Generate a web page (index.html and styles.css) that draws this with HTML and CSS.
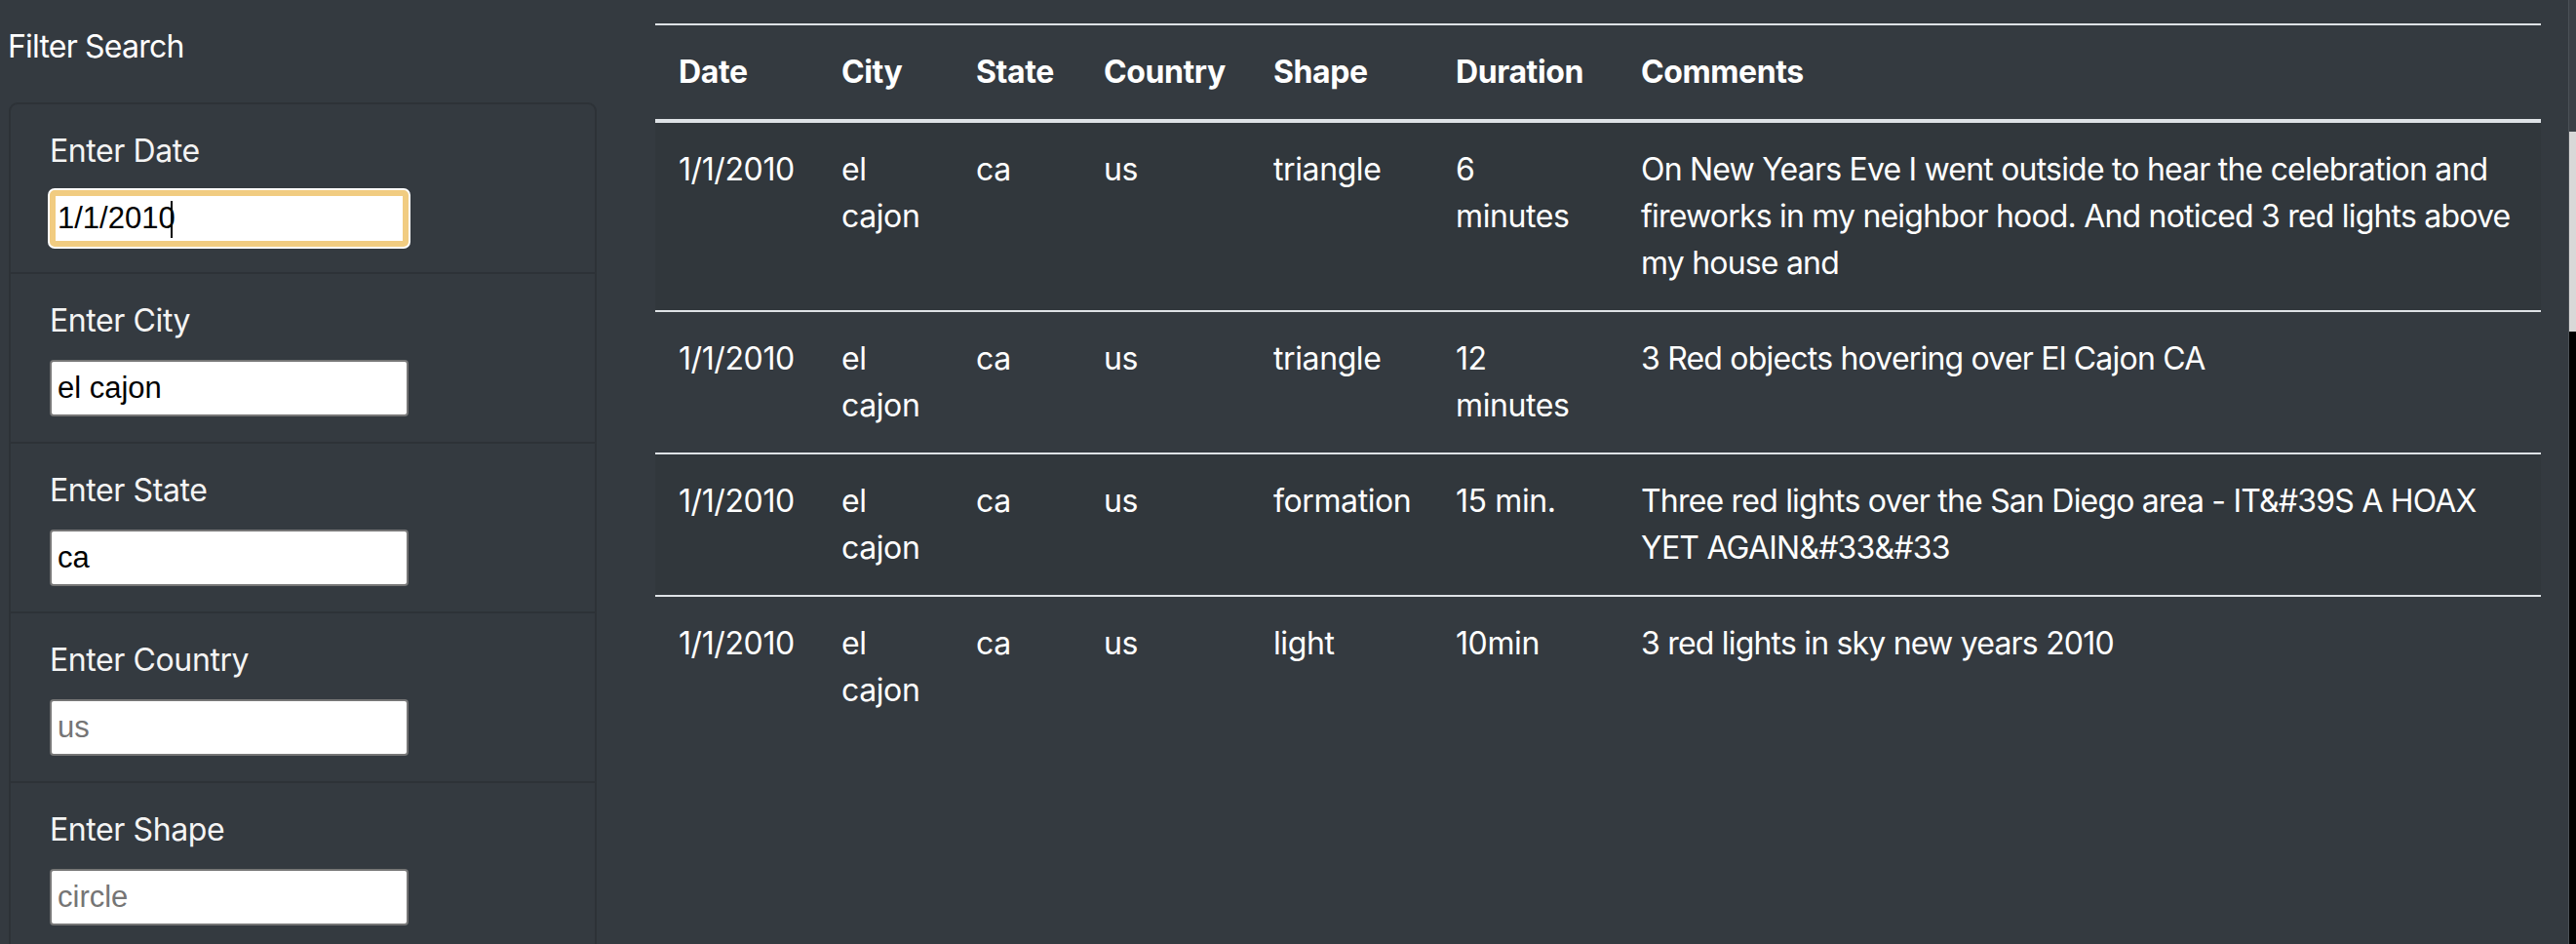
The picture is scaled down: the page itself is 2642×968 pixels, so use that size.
FILE: index.html
```html
<!DOCTYPE html>
<html lang="en">
<head>
<meta charset="utf-8">
<title>UFO Sightings</title>
<link rel="stylesheet" href="styles.css">
</head>
<body>
<div class="page">
  <aside class="sidebar">
    <div class="filter-title">Filter Search</div>
    <ul class="filters">
      <li class="filter">
        <label class="filter-label" for="datetime">Enter Date</label>
        <div class="field">
          <input class="filter-input is-focused" id="datetime" type="text" value="1/1/2010">
          <span class="caret"></span>
        </div>
      </li>
      <li class="filter">
        <label class="filter-label" for="city">Enter City</label>
        <div class="field"><input class="filter-input" id="city" type="text" value="el cajon"></div>
      </li>
      <li class="filter">
        <label class="filter-label" for="state">Enter State</label>
        <div class="field"><input class="filter-input" id="state" type="text" value="ca"></div>
      </li>
      <li class="filter">
        <label class="filter-label" for="country">Enter Country</label>
        <div class="field"><input class="filter-input" id="country" type="text" placeholder="us"></div>
      </li>
      <li class="filter">
        <label class="filter-label" for="shape">Enter Shape</label>
        <div class="field"><input class="filter-input" id="shape" type="text" placeholder="circle"></div>
      </li>
    </ul>
  </aside>
  <main class="content">
    <table class="sightings">
      <colgroup>
        <col class="c-date"><col class="c-city"><col class="c-state"><col class="c-country"><col class="c-shape"><col class="c-duration"><col class="c-comments">
      </colgroup>
      <thead>
        <tr><th>Date</th><th>City</th><th>State</th><th>Country</th><th>Shape</th><th>Duration</th><th>Comments</th></tr>
      </thead>
      <tbody>
        <tr><td>1/1/2010</td><td>el cajon</td><td>ca</td><td>us</td><td>triangle</td><td>6 minutes</td><td class="comment">On New Years Eve I went outside to hear the celebration and fireworks in my neighbor hood. And noticed 3 red lights above my house and</td></tr>
        <tr><td>1/1/2010</td><td>el cajon</td><td>ca</td><td>us</td><td>triangle</td><td>12 minutes</td><td class="comment">3 Red objects hovering over El Cajon CA</td></tr>
        <tr><td>1/1/2010</td><td>el cajon</td><td>ca</td><td>us</td><td>formation</td><td>15 min.</td><td class="comment">Three red lights over the San Diego area - IT&amp;#39S A HOAX YET AGAIN&amp;#33&amp;#33</td></tr>
        <tr><td>1/1/2010</td><td>el cajon</td><td>ca</td><td>us</td><td>light</td><td>10min</td><td class="comment">3 red lights in sky new years 2010</td></tr>
      </tbody>
    </table>
  </main>
  <div class="edge"></div>
</div>
</body>
</html>
```

FILE: styles.css
```css
html, body {
  margin: 0;
  padding: 0;
  height: 100%;
  overflow: hidden;
  background: #343a40;
}

body {
  font-family: Inter, "Liberation Sans", sans-serif;
  font-size: 32px;
  line-height: 48px;
  letter-spacing: -0.4px;
  color: #fff;
}

.page {
  display: flex;
  align-items: flex-start;
  height: 968px;
}

.sidebar {
  width: 664px;
  flex: none;
  padding: 24px 0 0 8px;
}

.filter-title {
  line-height: 48px;
  margin-bottom: 33px;
  letter-spacing: -0.8px;
}

.filters {
  list-style: none;
  margin: 0 0 0 1px;
  padding: 0;
  width: 599px;
  border: 2px solid #2d3237;
  border-radius: 9px;
}

.filter {
  padding: 24px 40px;
  border-bottom: 2px solid #2d3237;
}

.filter-label {
  display: block;
  line-height: 48px;
  margin-bottom: 16px;
  color: #f4f4f4;
}

.field {
  position: relative;
  width: 368px;
  margin-bottom: 2px;
}

.filter-input {
  display: block;
  box-sizing: border-box;
  width: 368px;
  height: 58px;
  margin: 0;
  padding: 0 6px;
  border: 2px solid #767676;
  border-radius: 4px;
  background: #fff;
  color: #000;
  font-family: "Liberation Sans", Arial, sans-serif;
  font-size: 31px;
  letter-spacing: 0;
  outline: none;
}

.filter-input::placeholder {
  color: #757575;
}

.filter-input.is-focused {
  border: 6px solid #f1cc81;
  padding: 0 2px;
  box-shadow: 0 0 0 2px #fff;
  border-radius: 5px;
}

.caret {
  position: absolute;
  left: 124px;
  top: 11px;
  width: 2px;
  height: 38px;
  background: #000;
}

.content {
  flex: none;
  width: 1934px;
  padding-top: 24px;
}

.sightings {
  width: 1934px;
  table-layout: fixed;
  border-collapse: collapse;
  color: #fff;
}

.c-date { width: 167px; }
.c-city { width: 138px; }
.c-state { width: 131px; }
.c-country { width: 174px; }
.c-shape { width: 187px; }
.c-duration { width: 190px; }
.c-comments { width: 947px; }

.sightings th,
.sightings td {
  padding: 24px;
  text-align: left;
  vertical-align: top;
  border-top: 2px solid #dee2e6;
}

.sightings th {
  font-weight: 700;
  border-bottom: 4px solid #dee2e6;
}

.sightings td.comment {
  letter-spacing: -0.8px;
}

.sightings tbody tr:nth-of-type(odd) {
  background: rgba(0, 0, 0, 0.05);
}

.sightings tbody tr:first-child td {
  border-top: 0;
}

.edge {
  flex: none;
  margin-left: auto;
  width: 7px;
  height: 968px;
  border-left: 1px solid #4b5157;
  background: linear-gradient(#3b4046 0, #3b4046 135px, #d8d8d8 135px, #d8d8d8 340px, #000 340px, #000 100%);
}
```
